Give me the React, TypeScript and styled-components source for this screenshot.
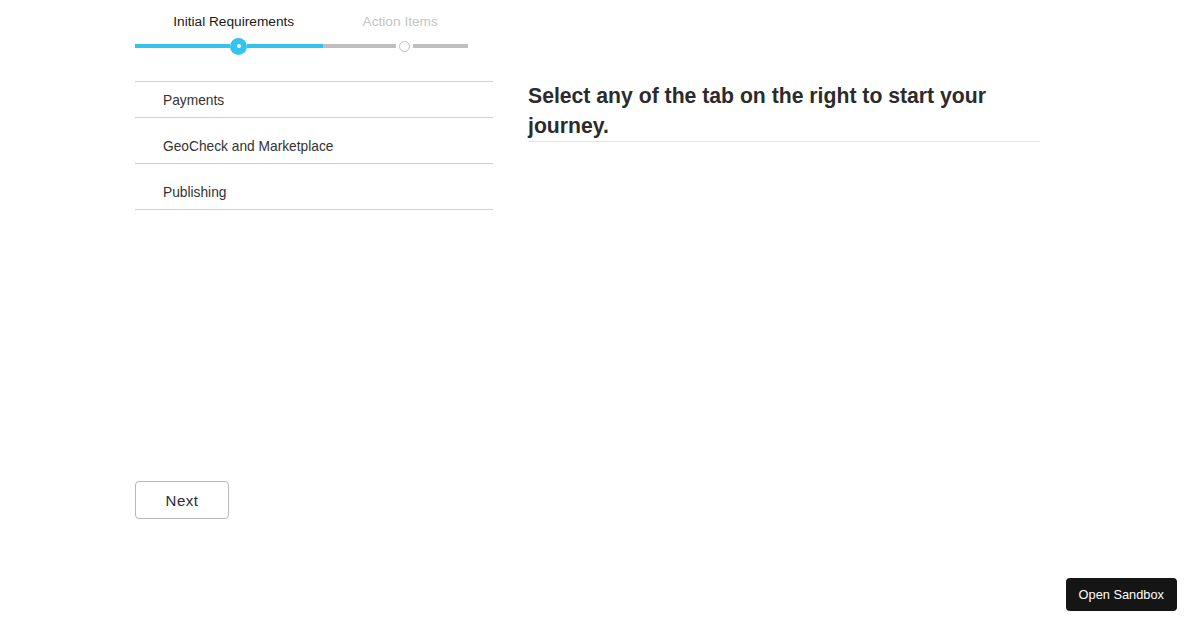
import React from "react";
import styled, { createGlobalStyle } from "styled-components";

const Global = createGlobalStyle`
  html, body { margin: 0; padding: 0; background: #fff; }
  body { font-family: "Liberation Sans", Arial, sans-serif; color: #333; }
  * { box-sizing: border-box; }
`;

const BLUE = "#33c3f0";
const GREY = "#bfbfbf";

const Page = styled.div`
  width: 1200px;
  height: 630px;
  padding: 0 0 0 135px;
  position: relative;
`;

const Stepper = styled.div`
  width: 333px;
  padding-top: 13px;
`;

const Labels = styled.div`
  display: flex;
  height: 18px;
`;

const Label = styled.div<{ $w: number; $active?: boolean }>`
  width: ${(p) => p.$w}px;
  text-align: center;
  font-size: 13.7px;
  line-height: 18px;
  color: ${(p) => (p.$active ? "#1a1a1a" : "#c4c4c4")};
  white-space: nowrap;
`;

const Track = styled.div`
  display: flex;
  align-items: center;
  height: 18px;
  margin-top: 6px;
`;

const Seg = styled.div<{ $w: number; $done?: boolean }>`
  width: ${(p) => p.$w}px;
  height: 4px;
  background: ${(p) => (p.$done ? BLUE : GREY)};
`;

const ActiveDot = styled.div`
  width: 17px;
  height: 17px;
  border-radius: 50%;
  background: ${BLUE};
  display: flex;
  align-items: center;
  justify-content: center;
  &::after {
    content: "";
    width: 4px;
    height: 4px;
    border-radius: 50%;
    background: #fff;
  }
`;

const IdleDot = styled.div`
  width: 11px;
  height: 11px;
  margin: 0 3px;
  border-radius: 50%;
  border: 1.5px solid ${GREY};
  background: #fff;
`;

const Body = styled.div`
  display: flex;
  gap: 35px;
  margin-top: 26px;
`;

const Side = styled.div`
  width: 358px;
  display: flex;
  flex-direction: column;
  height: 438px;
`;

const Tabs = styled.ul`
  list-style: none;
  margin: 0;
  padding: 0;
  border-top: 1px solid #cfcfcf;
`;

const Tab = styled.li<{ $first?: boolean }>`
  height: 36px;
  margin-top: ${(p) => (p.$first ? 0 : 10)}px;
  padding: 2px 0 0 28px;
  display: flex;
  align-items: center;
  font-size: 13.75px;
  color: #333;
  border-bottom: 1px solid #cfcfcf;
`;

const NextButton = styled.button`
  margin-top: auto;
  width: 94px;
  height: 38px;
  border: 1px solid #b8b8b8;
  border-radius: 4px;
  background: #fff;
  font-family: "Liberation Sans", Arial, sans-serif;
  font-size: 15px;
  letter-spacing: 0.5px;
  color: #2a2a3a;
  cursor: pointer;
`;

const Main = styled.div`
  width: 512px;
`;

const Heading = styled.h2`
  margin: 0;
  font-size: 21.2px;
  line-height: 30px;
  font-weight: 700;
  color: #2b2b2b;
  padding-bottom: 0;
  border-bottom: 1px solid #e6e6e6;
`;

const Sandbox = styled.button`
  position: fixed;
  right: 23px;
  bottom: 19px;
  height: 33px;
  padding: 0 13px;
  background: #151515;
  color: #fff;
  border: none;
  border-radius: 4px;
  font-family: "Liberation Sans", Arial, sans-serif;
  font-size: 12.8px;
`;

export default function App() {
  return (
    <>
      <Global />
      <Page>
        <Stepper>
          <Labels>
            <Label $w={198} $active>
              Initial Requirements
            </Label>
            <Label $w={136}>Action Items</Label>
          </Labels>
          <Track>
            <Seg $w={95} $done />
            <ActiveDot />
            <Seg $w={76} $done />
            <Seg $w={73} />
            <IdleDot />
            <Seg $w={55} />
          </Track>
        </Stepper>
        <Body>
          <Side>
            <Tabs>
              <Tab $first>Payments</Tab>
              <Tab>GeoCheck and Marketplace</Tab>
              <Tab>Publishing</Tab>
            </Tabs>
            <NextButton>Next</NextButton>
          </Side>
          <Main>
            <Heading>Select any of the tab on the right to start your journey.</Heading>
          </Main>
        </Body>
        <Sandbox>Open Sandbox</Sandbox>
      </Page>
    </>
  );
}
